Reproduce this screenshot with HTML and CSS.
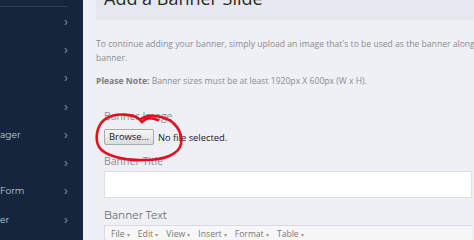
FILE: index.html
```html
<!DOCTYPE html>
<html>
<head>
<meta charset="utf-8">
<link rel="stylesheet" href="styles.css">
</head>
<body>
<div class="app">
  <aside class="sidebar">
    <div class="divider"></div>
    <ul class="nav">
      <li><span class="lbl"></span><span class="chev">›</span></li>
      <li><span class="lbl"></span><span class="chev">›</span></li>
      <li><span class="lbl"></span><span class="chev">›</span></li>
      <li><span class="lbl"></span><span class="chev">›</span></li>
      <li><span class="lbl">ager</span><span class="chev">›</span></li>
      <li><span class="lbl"></span><span class="chev">›</span></li>
      <li><span class="lbl">Form</span><span class="chev">›</span></li>
      <li><span class="lbl">er</span><span class="chev">›</span></li>
    </ul>
  </aside>
  <main class="main">
    <div class="page-head"><h1>Add a Banner Slide</h1></div>
    <p class="intro">To continue adding your banner, simply upload an image that's to be used as the banner along with a title and some text for the banner.</p>
    <p class="note"><b>Please Note:</b> Banner sizes must be at least 1920px X 600px (W x H).</p>
    <div class="form">
      <label class="lab lab-img">Banner Image</label>
      <div class="file-row"><span class="browse">Browse...</span><span class="nofile">No file selected.</span></div>
      <label class="lab lab-title">Banner Title</label>
      <div class="input"></div>
      <label class="lab lab-text">Banner Text</label>
      <div class="editor">
        <div class="menubar">
          <span>File <i>▾</i></span><span>Edit <i>▾</i></span><span>View <i>▾</i></span><span>Insert <i>▾</i></span><span>Format <i>▾</i></span><span>Table <i>▾</i></span>
        </div>
      </div>
    </div>
  </main>
</div>
<svg class="scribble" width="474" height="240" viewBox="0 0 474 240">
  <path d="M 158 120 C 150 117, 146 118, 142 122 C 136 113, 114 112, 104 120 C 96 127, 95 140, 99 147 C 105 156, 125 161, 145 160 C 165 160, 179 154, 181 144 C 183 132, 175 120, 161 117 C 153 115, 146 115, 141 119" fill="none" stroke="#e2101f" stroke-width="2.6" stroke-linecap="round"/>
</svg>
</body>
</html>
```
FILE: styles.css
```css
* { box-sizing: border-box; }
html, body { margin: 0; padding: 0; }
body { width: 474px; height: 240px; overflow: hidden; background: #eff0f5; font-family: "Open Sans", sans-serif; position: relative; }
.app { display: flex; height: 240px; }
.sidebar { width: 83px; flex: none; background: #15253c; padding-top: 6px; }
.divider { height: 1px; width: 68px; background: #2b3c55; }
.nav { list-style: none; margin: 0; padding: 0; }
.nav li { height: 28.3px; display: flex; align-items: center; justify-content: space-between; padding-right: 15px; font-family: "Montserrat", "Open Sans", sans-serif; font-size: 9px; color: #c9ced8; }
.chev { color: #a3aec0; font-size: 13px; line-height: 1; }
.main { flex: 1; padding-left: 13px; overflow: hidden; }
.page-head { height: 20px; background: #e5e8ef; position: relative; overflow: hidden; }
.page-head h1 { margin: 0; position: absolute; left: 8px; bottom: 13px; font-size: 18px; font-weight: 400; color: #2a2a2a; white-space: nowrap; line-height: 1; }
.intro, .note { margin: 0; font-size: 8.6px; line-height: 14px; color: #8a8c90; width: 540px; }
.intro { margin-top: 17px; }
.note { margin-top: 9px; }
.note b { color: #7a7c80; }
.form { padding-left: 8px; }
.lab { display: block; font-size: 10.5px; color: #8b8d92; line-height: 14px; }
.lab-img { margin-top: 21px; }
.file-row { display: flex; align-items: center; margin-top: 6px; gap: 4px; font-size: 9.4px; color: #222; }
.browse { display: inline-block; height: 16px; line-height: 14px; padding: 0 4px; border: 1px solid #a9a9a9; border-radius: 2px; background: linear-gradient(#f6f6f6, #dcdcdc); color: #222; }
.lab-title { margin-top: 9px; }
.input { height: 27px; margin-top: 3px; background: #fff; border: 1px solid #dfe0e5; margin-right: 2px; }
.lab-text { margin-top: 11px; color: #6a6c70; font-family: "Montserrat", "Open Sans", sans-serif; }
.editor { margin-top: 2px; border-top: 1px solid #d9dadf; border-left: 1px solid #d9dadf; background: #f7f7f8; height: 20px; margin-right: 2px; }
.menubar { display: flex; gap: 8px; padding: 2px 0 0 6px; font-size: 8.6px; color: #777; }
.menubar i { font-style: normal; font-size: 6px; color: #999; }
.scribble { position: absolute; left: 0; top: 0; pointer-events: none; }
```
